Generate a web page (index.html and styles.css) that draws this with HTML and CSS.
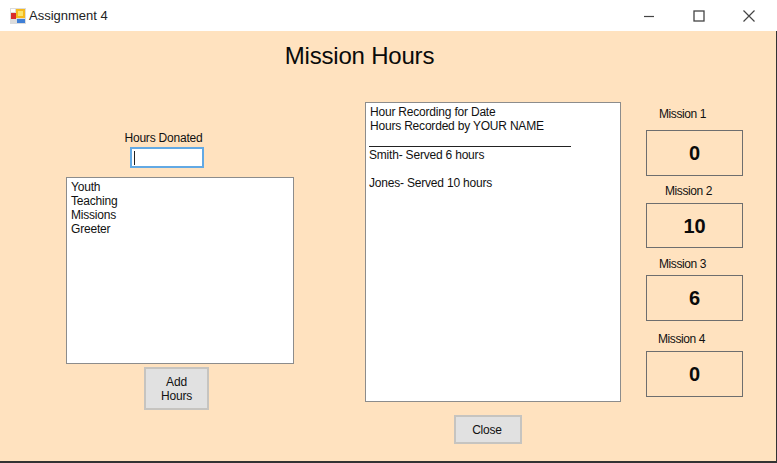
FILE: index.html
```html
<!DOCTYPE html>
<html lang="en">
<head>
  <meta charset="UTF-8">
  <title>Assignment 4</title>
  <meta name="viewport" content="width=device-width, initial-scale=1.0">
  <link rel="stylesheet" href="styles.css">
</head>
<body>

  <div class="window">

    <!-- Title bar -->
    <div class="titlebar">
      <svg class="app-icon" width="16" height="16" viewBox="0 0 16 16">
        <rect x="0" y="0" width="16" height="16" fill="#dcdcdc"/>
        <rect x="1" y="1" width="4" height="3" fill="#fff"/>
        <rect x="1" y="5" width="5" height="6" fill="#d92b2b"/>
        <rect x="6" y="1" width="9" height="9" fill="#f5b91c"/>
        <rect x="8" y="3" width="5" height="5" fill="#fbe36a"/>
        <rect x="7" y="11" width="8" height="4" fill="#3f7fd6"/>
      </svg>
      <span class="app-title">Assignment 4</span>
      <div class="window-buttons">
        <svg class="win-btn" width="12" height="12" viewBox="0 0 12 12">
          <path d="M1 6.5H11" stroke="#444" stroke-width="1.2" fill="none"/>
        </svg>
        <svg class="win-btn" width="12" height="12" viewBox="0 0 12 12">
          <rect x="1" y="1" width="10" height="10" stroke="#444" stroke-width="1.3" fill="none"/>
        </svg>
        <svg class="win-btn" width="12" height="12" viewBox="0 0 12 12">
          <path d="M0.5 0.5L11.5 11.5M11.5 0.5L0.5 11.5" stroke="#444" stroke-width="1.2" fill="none"/>
        </svg>
      </div>
    </div>

    <!-- Form -->
    <div class="form">
      <h1 class="heading">Mission Hours</h1>

      <div class="columns">

        <div class="col-entry">
          <label class="hours-label" for="hours">Hours Donated</label>
          <div class="hours-input" id="hours"><span class="caret"></span></div>
          <div class="listbox">
            <div>Youth</div>
            <div>Teaching</div>
            <div>Missions</div>
            <div>Greeter</div>
          </div>
          <button class="btn btn-add">Add<br>Hours</button>
        </div>

        <div class="col-report">
          <div class="report">
            <div class="line">Hour Recording for Date</div>
            <div class="line">Hours Recorded by YOUR NAME</div>
            <div class="rule"></div>
            <div>Smith- Served 6 hours</div>
            <div class="blank"></div>
            <div>Jones- Served 10 hours</div>
          </div>
          <button class="btn btn-close">Close</button>
        </div>

        <div class="col-totals">
          <div class="mission-label m1">Mission 1</div>
          <div class="total t1">0</div>
          <div class="mission-label m2">Mission 2</div>
          <div class="total t2">10</div>
          <div class="mission-label m3">Mission 3</div>
          <div class="total t3">6</div>
          <div class="mission-label m4">Mission 4</div>
          <div class="total t4">0</div>
        </div>

      </div>
    </div>

  </div>

</body>
</html>
```

FILE: styles.css
```css
* {
  box-sizing: border-box;
}
body {
  margin: 0;
  padding: 0;
  background-color: #fff;
  font-family: "Liberation Sans", Arial, sans-serif;
  font-size: 12px;
  line-height: 14px;
  letter-spacing: -0.2px;
  color: #111;
}
.window {
  display: flex;
  flex-direction: column;
  width: 777px;
  height: 463px;
  overflow: hidden;
}

/* title bar */
.titlebar {
  display: flex;
  align-items: center;
  height: 31px;
  padding-left: 10px;
  background-color: #fff;
}
.app-icon {
  margin-right: 3px;
}
.app-title {
  font-size: 13px;
  letter-spacing: 0;
  color: #222;
}
.window-buttons {
  display: flex;
  gap: 38px;
  margin-left: auto;
  margin-right: 22px;
}

/* form */
.form {
  flex: 1;
  display: flex;
  flex-direction: column;
  background-color: #ffe2bf;
  border-right: 1px solid #333;
  border-bottom: 2px solid #333;
}
.heading {
  margin: 11px 0 0 0;
  padding-right: 57px;
  height: 28px;
  font-size: 24px;
  line-height: 28px;
  letter-spacing: -0.2px;
  font-weight: normal;
  text-align: center;
  color: #0a0a0a;
}
.columns {
  display: flex;
  align-items: flex-start;
  padding: 32px 0 0 66px;
}

/* left column */
.col-entry {
  display: flex;
  flex-direction: column;
  align-items: center;
  width: 228px;
  margin-top: 29px;
}
.hours-label {
  margin-right: 33px;
  margin-bottom: 2px;
}
.hours-input {
  display: flex;
  align-items: center;
  width: 74px;
  height: 21px;
  margin-right: 26px;
  padding-left: 2px;
  background-color: #fff;
  border: 2px solid #62a9e4;
}
.caret {
  width: 1px;
  height: 14px;
  background-color: #222;
}
.listbox {
  width: 228px;
  height: 187px;
  margin-top: 9px;
  padding: 2px 4px;
  background-color: #fff;
  border: 1px solid #8c8c8c;
}
.btn {
  padding: 0;
  font-family: inherit;
  font-size: 12px;
  line-height: 14px;
  letter-spacing: -0.2px;
  color: #111;
  background-color: #e1e1e1;
  border: 2px solid #c6c4c0;
}
.btn-add {
  width: 65px;
  height: 43px;
  margin-top: 3px;
  margin-right: 7px;
}

/* middle column */
.col-report {
  display: flex;
  flex-direction: column;
  align-items: center;
  width: 256px;
  margin-left: 71px;
}
.report {
  width: 256px;
  height: 300px;
  padding: 2px 3px;
  background-color: #fff;
  border: 1px solid #8c8c8c;
}
.line {
  padding-left: 1px;
}
.rule {
  width: 202px;
  height: 14px;
  margin-bottom: 1px;
  border-bottom: 1px solid #222;
}
.blank {
  height: 14px;
}
.btn-close {
  width: 68px;
  height: 29px;
  margin-top: 13px;
  margin-right: 10px;
  padding-right: 2px;
}

/* right column */
.col-totals {
  display: flex;
  flex-direction: column;
  width: 97px;
  margin-left: 25px;
  margin-top: 5px;
}
.mission-label {
  height: 14px;
  padding-left: 13px;
  letter-spacing: -0.4px;
}
.mission-label.m2 {
  padding-left: 19px;
}
.mission-label.m4 {
  padding-left: 12px;
}
.total {
  display: flex;
  align-items: center;
  justify-content: center;
  width: 97px;
  height: 45px;
  font-size: 20px;
  font-weight: bold;
  letter-spacing: 0;
  color: #0a0a0a;
  border: 1px solid #6e6e6e;
}
.t1 {
  height: 46px;
  margin-top: 9px;
  margin-bottom: 8px;
}
.t2 {
  margin-top: 5px;
  margin-bottom: 9px;
}
.t3 {
  height: 46px;
  margin-top: 4px;
  margin-bottom: 11px;
}
.t4 {
  height: 46px;
  margin-top: 5px;
}
```
